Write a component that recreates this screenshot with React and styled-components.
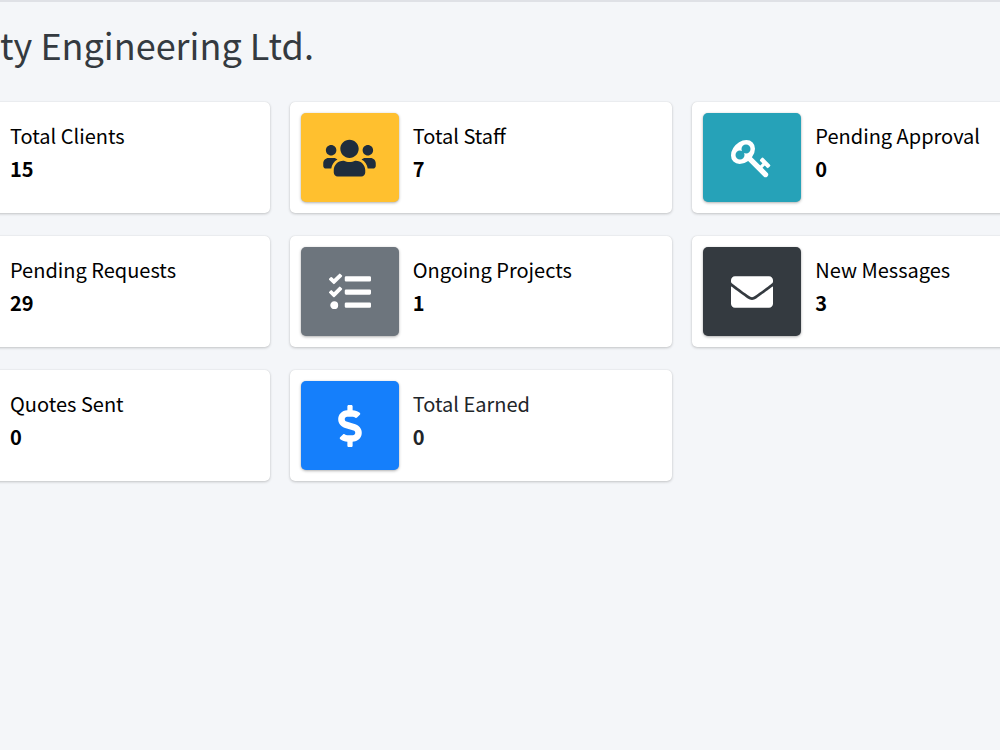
import React from "react";
import styled, { createGlobalStyle } from "styled-components";
import { FaUsers, FaTasks, FaEnvelope, FaDollarSign } from "react-icons/fa";

const GlobalStyle = createGlobalStyle`
  *, *::before, *::after { box-sizing: border-box; }
  body {
    margin: 0;
    background: #f4f6f9;
    color: #212529;
    font-family: "Noto Sans CJK SC", "Noto Sans", sans-serif;
  }
`;

const Page = styled.main`
  min-height: 100vh;
  overflow: hidden;
  border-top: 2px solid #dfe1e6;
`;

const Header = styled.header`
  padding: 20px 0 36px;
`;

const Title = styled.h1`
  margin: 0;
  color: #343a40;
  font-size: 36px;
  font-weight: 400;
  line-height: 44px;
  white-space: nowrap;
`;

const Board = styled.section`
  display: grid;
  grid-template-columns: repeat(3, minmax(0, 1fr));
  gap: 23px 20px;
  margin: 0 -75px 0 -113px;
`;

const Card = styled.article`
  display: flex;
  gap: 14px;
  padding: 11px;
  border-radius: 5px;
  background: #fff;
  box-shadow: 0 0 1px rgba(0, 0, 0, 0.13), 0 1px 3px rgba(0, 0, 0, 0.2);
  color: ${(p) => (p.$muted ? "#212529" : "#000")};
`;

const Tile = styled.span`
  display: flex;
  flex: 0 0 98px;
  align-items: center;
  justify-content: center;
  height: 89px;
  border-radius: 5px;
  background: ${(p) => p.$bg};
  box-shadow: 0 0 1px rgba(0, 0, 0, 0.13), 0 1px 3px rgba(0, 0, 0, 0.3);
  color: ${(p) => p.$fg || "#fff"};

  svg {
    width: ${(p) => p.$iconWidth || 42}px;
    height: 42px;
  }
`;

const Content = styled.div`
  min-width: 0;
  padding-top: 6px;
  font-size: 20px;
  line-height: 33px;
  white-space: nowrap;
`;

const Label = styled.div`
  font-weight: 400;
`;

const Value = styled.div`
  font-weight: 700;
`;

const KeyIcon = () => (
  <svg viewBox="0 0 1792 1792" fill="currentColor" aria-hidden="true">
    <path d="M832 512q0-80-56-136t-136-56-136 56-56 136q0 42 19 83-41-19-83-19-80 0-136 56t-56 136 56 136 136 56 136-56 56-136q0-42-19-83 41 19 83 19 80 0 136-56t56-136zm851 704q0 17-49 66t-66 49q-9 0-28.5-16t-36.5-33-38.5-40-24.5-26l-96 96 220 220q28 28 28 68 0 42-39 81t-81 39q-40 0-68-28l-671-671q-176 131-365 131-163 0-265.5-102.5t-102.5-265.5q0-160 95-313t248-248 313-95q163 0 265.5 102.5t102.5 265.5q0 189-131 365l355 355 96-96q-3-3-26-24.5t-40-38.5-33-36.5-16-28.5q0-17 49-66t66-49q13 0 23 10 6 6 46 44.5t82 79.5 86.5 86 73 78 28.5 41z" />
  </svg>
);

const stats = [
  { label: "Total Clients", value: 15, bg: "#fff" },
  { label: "Total Staff", value: 7, bg: "#ffc02f", fg: "#1f2d3d", icon: FaUsers, iconWidth: 53 },
  { label: "Pending Approval", value: 0, bg: "#26a2b8", icon: KeyIcon },
  { label: "Pending Requests", value: 29, bg: "#fff" },
  { label: "Ongoing Projects", value: 1, bg: "#6d757d", icon: FaTasks },
  { label: "New Messages", value: 3, bg: "#343a40", icon: FaEnvelope },
  { label: "Quotes Sent", value: 0, bg: "#fff" },
  { label: "Total Earned", value: 0, bg: "#157ffb", icon: FaDollarSign, muted: true },
];

export default function App() {
  return (
    <>
      <GlobalStyle />
      <Page>
        <Header>
          <Title>ty Engineering Ltd.</Title>
        </Header>
        <Board>
          {stats.map(({ label, value, bg, fg, icon: Icon, iconWidth, muted }) => (
            <Card key={label} $muted={muted}>
              <Tile $bg={bg} $fg={fg} $iconWidth={iconWidth}>{Icon && <Icon />}</Tile>
              <Content>
                <Label>{label}</Label>
                <Value>{value}</Value>
              </Content>
            </Card>
          ))}
        </Board>
      </Page>
    </>
  );
}
